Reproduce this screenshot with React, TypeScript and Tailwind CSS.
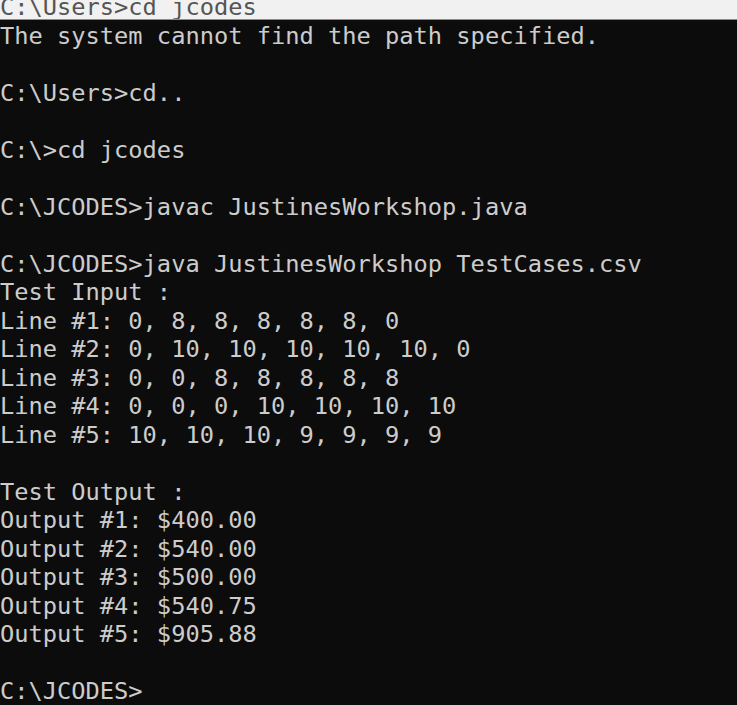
import React from "react";

const lines: string[] = [
  "The system cannot find the path specified.",
  "",
  "C:\\Users>cd..",
  "",
  "C:\\>cd jcodes",
  "",
  "C:\\JCODES>javac JustinesWorkshop.java",
  "",
  "C:\\JCODES>java JustinesWorkshop TestCases.csv",
  "Test Input :",
  "Line #1: 0, 8, 8, 8, 8, 8, 0",
  "Line #2: 0, 10, 10, 10, 10, 10, 0",
  "Line #3: 0, 0, 8, 8, 8, 8, 8",
  "Line #4: 0, 0, 0, 10, 10, 10, 10",
  "Line #5: 10, 10, 10, 9, 9, 9, 9",
  "",
  "Test Output :",
  "Output #1: $400.00",
  "Output #2: $540.00",
  "Output #3: $500.00",
  "Output #4: $540.75",
  "Output #5: $905.88",
  "",
  "C:\\JCODES>",
];

export default function App() {
  return (
    <div
      className="w-[737px] h-[705px] overflow-hidden bg-[#0c0c0c] flex flex-col"
      style={{ fontFamily: '"DejaVu Sans Mono", "Liberation Mono", monospace' }}
    >
      <div className="h-[20px] shrink-0 overflow-hidden bg-[#f1f1f1] border-b border-[#8a8a8a]">
        <div className="mt-[-7px] text-[23.7px] leading-[28.52px] text-[#555555] whitespace-pre">
          {"C:\\Users>cd jcodes"}
        </div>
      </div>
      <div className="pt-[1.6px] flex flex-col text-[23.7px] leading-[28.52px] text-[#cccccc] whitespace-pre">
        {lines.map((l, i) => (
          <div key={i} className="h-[28.52px]">
            {l}
          </div>
        ))}
      </div>
    </div>
  );
}
